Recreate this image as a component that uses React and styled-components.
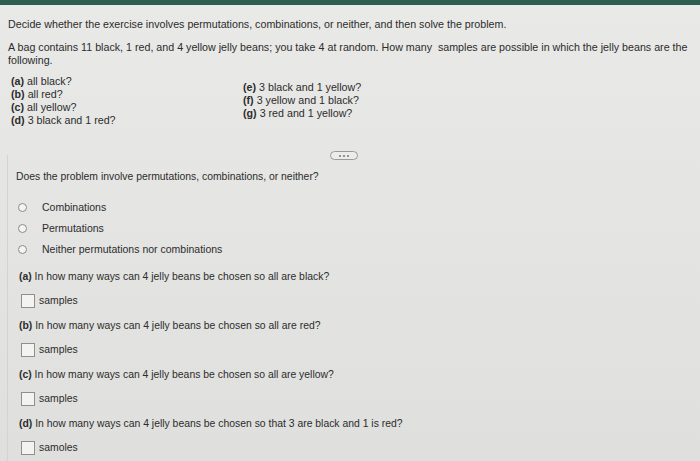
import React from "react";
import styled, { createGlobalStyle } from "styled-components";

const GlobalStyle = createGlobalStyle`
  html, body {
    margin: 0;
    padding: 0;
    background: #e4e4e2;
  }
  body {
    font-family: "Liberation Sans", Arial, sans-serif;
    color: #2c2c2c;
    width: 700px;
    height: 461px;
    overflow: hidden;
  }
`;

const TopBar = styled.div`
  height: 5px;
  background: #2e5e50;
`;

const Page = styled.div`
  height: 456px;
  background: linear-gradient(180deg, #e9e9e7 0%, #e3e3e1 60%, #dfdfdd 100%);
  display: flex;
  flex-direction: column;
`;

const Intro = styled.div`
  padding: 13px 6px 0 8px;
  font-size: 10.7px;
  line-height: 13px;
`;

const Para = styled.p`
  margin: 0 0 ${p => p.gap || 10}px;
`;

const Parts = styled.div`
  display: grid;
  grid-template-columns: 232px 1fr;
  padding-left: 3px;
`;

const PartCol = styled.div`
  display: flex;
  flex-direction: column;
  padding-top: ${p => p.offset || 0}px;
`;

const Part = styled.div`
  font-size: 10.7px;
  line-height: 13px;
  b {
    font-weight: 700;
  }
`;

const Divider = styled.div`
  margin: 28px 10px 0 8px;
  height: 1px;
  background: #a9a9a7;
  position: relative;
`;

const Pill = styled.div`
  position: absolute;
  left: 322px;
  top: -4px;
  width: 26px;
  height: 7px;
  border: 1px solid #9a9a98;
  border-radius: 5px;
  background: #ececea;
  display: flex;
  align-items: center;
  justify-content: center;
  gap: 2px;
  span {
    width: 2px;
    height: 2px;
    border-radius: 50%;
    background: #777;
  }
`;

const Body = styled.div`
  flex: 1;
  margin-left: 7px;
  border-left: 1px solid #d3d3d1;
  padding: 16px 0 0 8px;
  font-size: 10.4px;
  line-height: 12px;
`;

const Question = styled.div`
  margin-bottom: 18px;
`;

const Options = styled.div`
  display: flex;
  flex-direction: column;
  gap: 9px;
  padding-left: 1px;
  margin-bottom: 16px;
`;

const Option = styled.label`
  display: flex;
  align-items: center;
  gap: 15px;
  font-size: 10.5px;
`;

const Radio = styled.span`
  width: 9px;
  height: 9px;
  border-radius: 50%;
  border: 1.5px solid #8a8a8a;
  background: #f4f4f2;
  box-sizing: border-box;
  margin-left: 1px;
`;

const Sub = styled.div`
  display: flex;
  flex-direction: column;
`;

const SubQ = styled.div`
  padding-left: 3px;
  margin-bottom: 11px;
  b {
    font-weight: 700;
  }
`;

const Answer = styled.div`
  display: flex;
  align-items: center;
  gap: 4px;
  padding-left: 5px;
  margin-bottom: 12px;
`;

const Box = styled.span`
  width: 14px;
  height: 14px;
  border: 1px solid #8f8f8d;
  background: #f3f3f1;
  box-sizing: border-box;
`;

const subs = [
  ["(a)", "In how many ways can 4 jelly beans be chosen so all are black?", "samples"],
  ["(b)", "In how many ways can 4 jelly beans be chosen so all are red?", "samples"],
  ["(c)", "In how many ways can 4 jelly beans be chosen so all are yellow?", "samples"],
  ["(d)", "In how many ways can 4 jelly beans be chosen so that 3 are black and 1 is red?", "samoles"]
];

export default function App() {
  return (
    <>
      <GlobalStyle />
      <TopBar />
      <Page>
        <Intro>
          <Para gap={10}>
            Decide whether the exercise involves permutations, combinations, or neither, and then solve the problem.
          </Para>
          <Para gap={8}>
            A bag contains 11 black, 1 red, and 4 yellow jelly beans; you take 4 at random. How many&nbsp; samples are possible in which the jelly beans are the following.
          </Para>
          <Parts>
            <PartCol>
              <Part><b>(a)</b> all black?</Part>
              <Part><b>(b)</b> all red?</Part>
              <Part><b>(c)</b> all yellow?</Part>
              <Part><b>(d)</b> 3 black and 1 red?</Part>
            </PartCol>
            <PartCol offset={6}>
              <Part><b>(e)</b> 3 black and 1 yellow?</Part>
              <Part><b>(f)</b> 3 yellow and 1 black?</Part>
              <Part><b>(g)</b> 3 red and 1 yellow?</Part>
            </PartCol>
          </Parts>
        </Intro>
        <Divider>
          <Pill><span /><span /><span /></Pill>
        </Divider>
        <Body>
          <Question>Does the problem involve permutations, combinations, or neither?</Question>
          <Options>
            <Option><Radio />Combinations</Option>
            <Option><Radio />Permutations</Option>
            <Option><Radio />Neither permutations nor combinations</Option>
          </Options>
          <Sub>
            {subs.map(([l, q, s]) => (
              <React.Fragment key={l}>
                <SubQ><b>{l}</b> {q}</SubQ>
                <Answer><Box />{s}</Answer>
              </React.Fragment>
            ))}
          </Sub>
        </Body>
      </Page>
    </>
  );
}
